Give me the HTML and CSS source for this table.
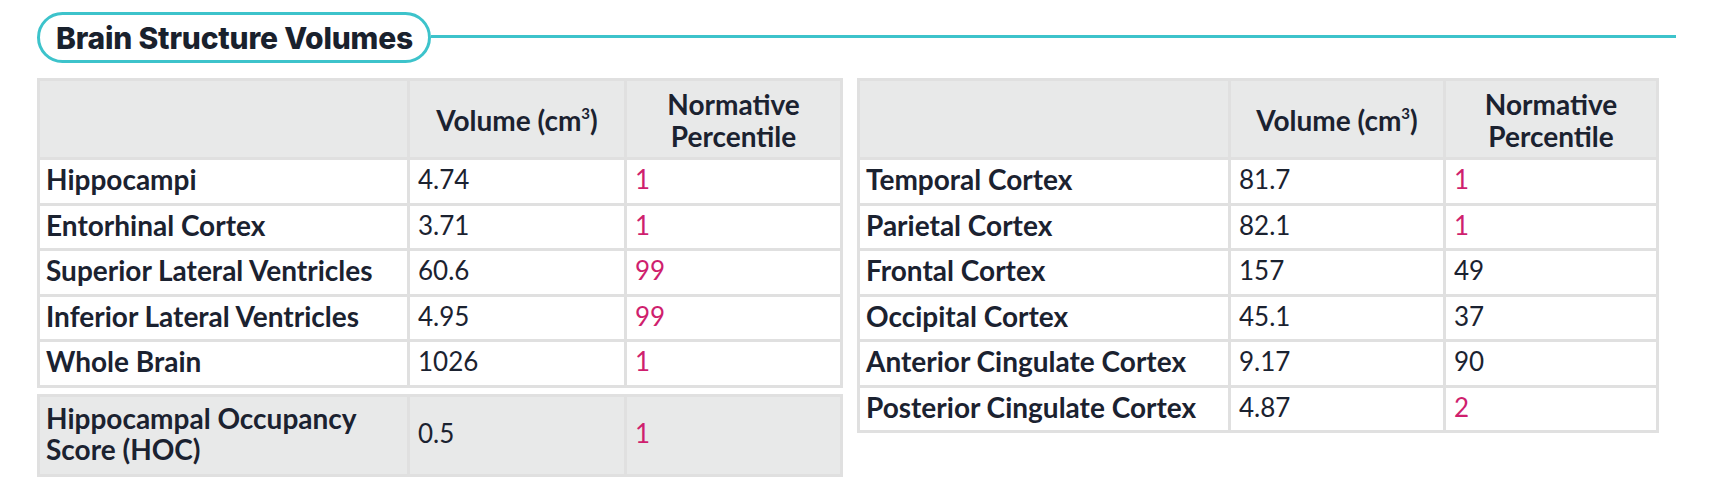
FILE: index.html
```html
<!DOCTYPE html>
<html>
<head>
<meta charset="utf-8">
<link rel="stylesheet" href="styles.css">
</head>
<body>
<div class="page">
  <div class="section-head">
    <div class="pill">Brain Structure Volumes</div>
    <div class="rule"></div>
  </div>
  <div class="tables">
    <div class="col">
      <table class="vol">
        <colgroup><col class="c1"><col class="c2"><col class="c3"></colgroup>
        <thead>
          <tr><th></th><th>Volume (cm<sup>3</sup>)</th><th>Normative<br>Percentile</th></tr>
        </thead>
        <tbody>
          <tr><td class="name">Hippocampi</td><td>4.74</td><td class="alert">1</td></tr>
          <tr><td class="name">Entorhinal Cortex</td><td>3.71</td><td class="alert">1</td></tr>
          <tr><td class="name">Superior Lateral Ventricles</td><td>60.6</td><td class="alert">99</td></tr>
          <tr><td class="name">Inferior Lateral Ventricles</td><td>4.95</td><td class="alert">99</td></tr>
          <tr><td class="name">Whole Brain</td><td>1026</td><td class="alert">1</td></tr>
        </tbody>
      </table>
      <table class="vol hoc">
        <colgroup><col class="c1"><col class="c2"><col class="c3"></colgroup>
        <tbody>
          <tr><td class="name">Hippocampal Occupancy<br>Score (HOC)</td><td>0.5</td><td class="alert">1</td></tr>
        </tbody>
      </table>
    </div>
    <div class="col">
      <table class="vol right">
        <colgroup><col class="c1"><col class="c2"><col class="c3"></colgroup>
        <thead>
          <tr><th></th><th>Volume (cm<sup>3</sup>)</th><th>Normative<br>Percentile</th></tr>
        </thead>
        <tbody>
          <tr><td class="name">Temporal Cortex</td><td>81.7</td><td class="alert">1</td></tr>
          <tr><td class="name">Parietal Cortex</td><td>82.1</td><td class="alert">1</td></tr>
          <tr><td class="name">Frontal Cortex</td><td>157</td><td>49</td></tr>
          <tr><td class="name">Occipital Cortex</td><td>45.1</td><td>37</td></tr>
          <tr><td class="name">Anterior Cingulate Cortex</td><td>9.17</td><td>90</td></tr>
          <tr><td class="name">Posterior Cingulate Cortex</td><td>4.87</td><td class="alert">2</td></tr>
        </tbody>
      </table>
    </div>
  </div>
</div>
</body>
</html>
```

FILE: styles.css
```css
* { box-sizing: border-box; }
html, body { margin: 0; padding: 0; background: #ffffff; }
body { font-family: Lato, "Liberation Sans", sans-serif; color: #1b2230; }

.page {
  padding: 12px 0 0 37px;
  width: 1676px;
}

.section-head {
  display: flex;
  align-items: center;
  height: 51px;
}
.pill {
  height: 51px;
  padding: 0 15px 0 16px;
  border: 3px solid #3dc3cb;
  border-radius: 26px;
  display: flex;
  align-items: center;
  font-family: Inter, "Liberation Sans", sans-serif;
  font-weight: 800;
  font-size: 30px;
  letter-spacing: -0.2px;
  color: #19212d;
  white-space: nowrap;
}
.rule {
  flex: 1;
  height: 3px;
  background: #3dc3cb;
  margin-top: -2px;
}

.tables {
  display: flex;
  gap: 14px;
  margin-top: 15px;
  align-items: flex-start;
}
.col {
  display: flex;
  flex-direction: column;
  gap: 6px;
}

table.vol {
  border-collapse: collapse;
  table-layout: fixed;
  width: 803px;
}
table.vol.right { width: 799px; }
col.c1 { width: 370px; }
col.c2 { width: 217px; }
col.c3 { width: 216px; }
table.right col.c1 { width: 371px; }
table.right col.c2 { width: 215px; }
table.right col.c3 { width: 213px; }

table.vol th, table.vol td {
  border: 3px solid #e0e0e0;
}
table.vol thead th {
  background: #e8e9e9;
  height: 79px;
  font-weight: 700;
  font-size: 28px;
  line-height: 32px;
  text-align: center;
  vertical-align: middle;
  padding: 2px 6px 0;
}
table.vol sup {
  font-size: 15px;
  line-height: 0;
  vertical-align: 12px;
}
table.vol tbody td {
  height: 45.5px;
  font-size: 26px;
  font-weight: 400;
  line-height: 31px;
  padding: 0 8px 3px 8px;
  vertical-align: middle;
  background: #ffffff;
}
table.vol tbody td.name {
  font-weight: 700;
  font-size: 28px;
  padding-left: 6px;
}
table.vol td.alert { color: #cf1f6e; }

table.hoc tbody td {
  background: #e8e9e9;
  height: 80px;
}
```
